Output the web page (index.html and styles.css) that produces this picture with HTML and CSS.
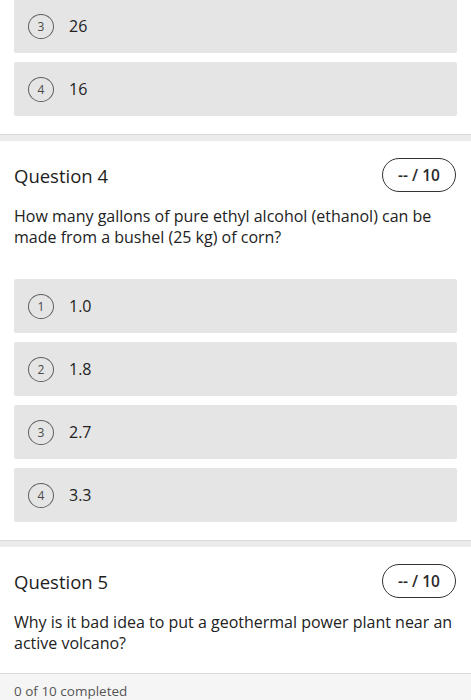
FILE: index.html
```html
<!DOCTYPE html>
<html lang="en">
<head>
<meta charset="utf-8">
<title>Quiz</title>
<link rel="stylesheet" href="styles.css">
</head>
<body>
<div class="options options-top">
  <div class="option"><span class="num">3</span><span class="label">26</span></div>
  <div class="option"><span class="num">4</span><span class="label">16</span></div>
</div>
<div class="divider"></div>
<section class="question">
  <div class="q-head">
    <h2 class="q-title">Question 4</h2>
    <span class="badge">-- / 10</span>
  </div>
  <p class="q-text">How many gallons of pure ethyl alcohol (ethanol) can be made from a bushel (25 kg) of corn?</p>
  <div class="options options-q">
    <div class="option"><span class="num">1</span><span class="label">1.0</span></div>
    <div class="option"><span class="num">2</span><span class="label">1.8</span></div>
    <div class="option"><span class="num">3</span><span class="label">2.7</span></div>
    <div class="option"><span class="num">4</span><span class="label">3.3</span></div>
  </div>
</section>
<div class="divider"></div>
<section class="question">
  <div class="q-head">
    <h2 class="q-title">Question 5</h2>
    <span class="badge">-- / 10</span>
  </div>
  <p class="q-text q-text-last">Why is it bad idea to put a geothermal power plant near an active volcano?</p>
</section>
<footer class="footer">0 of 10 completed</footer>
</body>
</html>
```
FILE: styles.css
```css
html, body {
  margin: 0;
  padding: 0;
  background: #ffffff;
}
body {
  font-family: "Open Sans", "Liberation Sans", sans-serif;
  color: #222;
  width: 471px;
  overflow: hidden;
}
.options {
  display: flex;
  flex-direction: column;
  gap: 9px;
  padding: 0 14px;
}
.options-top {
  margin-top: -1px;
  padding-bottom: 18px;
}
.options-q {
  margin-top: 32px;
  padding: 0 0 18px;
}
.option {
  height: 54px;
  background: #e5e5e5;
  border-radius: 2px;
  display: flex;
  align-items: center;
  padding-left: 14px;
  box-sizing: border-box;
}
.num {
  width: 24px;
  height: 23px;
  border: 1px solid #5f5f5f;
  border-radius: 50%;
  display: flex;
  align-items: center;
  justify-content: center;
  font-size: 12px;
  color: #4a4a4a;
  box-sizing: content-box;
}
.label {
  margin-left: 15px;
  font-size: 16px;
  color: #222;
}
.divider {
  height: 6px;
  background: #ebebeb;
  border-top: 1px solid #d9d9d9;
}
.question {
  padding: 17px 14px 0;
}
.q-head {
  display: flex;
  justify-content: space-between;
  align-items: center;
  height: 34px;
}
.q-title {
  margin: 0;
  font-size: 18.5px;
  font-weight: 400;
  color: #1e1e1e;
}
.badge {
  width: 74px;
  height: 34px;
  box-sizing: border-box;
  border: 1.5px solid #333;
  border-radius: 17px;
  display: flex;
  align-items: center;
  justify-content: center;
  font-size: 15.5px;
  font-weight: 600;
  color: #2a2a2a;
  margin-right: 1px;
}
.q-text {
  margin: 14px 0 0;
  font-size: 16px;
  line-height: 20.5px;
  color: #222;
}
.q-text-last {
  padding-bottom: 19.5px;
}
.footer {
  border-top: 1px solid #d8d8d8;
  background: #f5f5f5;
  padding: 8px 14px 10px;
  font-size: 13.5px;
  line-height: 18px;
  color: #555;
}
```
